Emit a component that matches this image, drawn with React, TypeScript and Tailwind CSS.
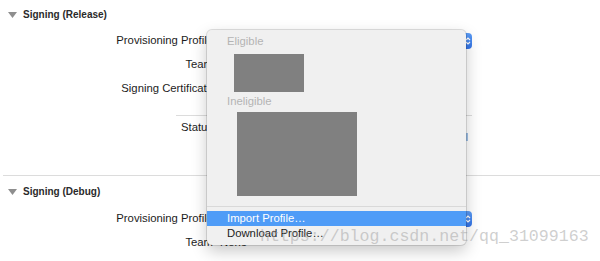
import React from "react";

const Tri = () => (
  <svg width="9" height="6" viewBox="0 0 9 6" className="shrink-0">
    <path d="M0 0 H9 L4.5 6 Z" fill="#8e8e8e" />
  </svg>
);

const Chev = () => (
  <svg width="6" height="10" viewBox="0 0 6 10">
    <path d="M1 4 L3 2 L5 4 M1 6 L3 8 L5 6" stroke="white" strokeWidth="1.2" fill="none" />
  </svg>
);

const Row = ({ label, children, className = "" }: { label: string; children?: React.ReactNode; className?: string }) => (
  <div className={`flex items-center h-[16px] ${className}`}>
    <div className="w-[213px] text-right text-[11.3px] text-[#1c1c1c] leading-none">{label}</div>
    <div className="ml-[7px] flex items-center h-full">{children}</div>
  </div>
);

const Popup = () => (
  <div className="w-[252px] h-[16px] rounded-[4px] bg-gradient-to-b from-[#5b9cf6] to-[#3272e6] flex items-center justify-end pr-[1px]">
    <Chev />
  </div>
);

export default function App() {
  return (
    <div
      className="relative w-[600px] h-[261px] overflow-hidden bg-white"
      style={{ fontFamily: '"Liberation Sans", Arial, sans-serif' }}
    >
      {/* Background form */}
      <div className="pt-[8px]">
        <div className="flex items-center h-[14px] pl-[8px] gap-[6px]">
          <Tri />
          <span className="text-[10px] font-bold text-[#2a2a2a] leading-none">Signing (Release)</span>
        </div>
        <Row label="Provisioning Profile" className="mt-[11px]">
          <Popup />
        </Row>
        <Row label="Team" className="mt-[8px]" />
        <Row label="Signing Certificate" className="mt-[8px]" />
        <div className="mt-[18px] ml-[176px] w-[296px] h-px bg-[#dcdcdc]" />
        <Row label="Status" className="mt-[4px]">
          <div className="w-[246px]" />
          <div className="w-[2px] h-[8px] mt-[18px] bg-[#9fc0e6]" />
        </Row>
        <div className="mt-[39px] ml-[3px] h-px bg-[#dcdcdc]" />
        <div className="flex items-center h-[14px] pl-[8px] gap-[6px] mt-[9px]">
          <Tri />
          <span className="text-[10px] font-bold text-[#2a2a2a] leading-none">Signing (Debug)</span>
        </div>
        <Row label="Provisioning Profile" className="mt-[12px]">
          <Popup />
        </Row>
        <Row label="Team" className="mt-[8px]">
          <span className="text-[11.3px] text-[#1c1c1c] leading-none">None</span>
        </Row>
      </div>

      {/* Popup menu */}
      <div className="absolute left-[207px] top-[30px] w-[259px] h-[215px] rounded-[5px] bg-[#f0f0f0] shadow-[0_0_0_1px_rgba(0,0,0,0.12),0_6px_16px_rgba(0,0,0,0.22)] pt-[5px] flex flex-col">
        <div className="h-[14px] pl-[20px] flex items-center text-[11.3px] text-[#b4b4b4] leading-none">Eligible</div>
        <div className="mt-[5px] ml-[27px] w-[70px] h-[38px] bg-[#808080]" />
        <div className="mt-[3px] h-[14px] pl-[20px] flex items-center text-[11.3px] text-[#b4b4b4] leading-none">Ineligible</div>
        <div className="mt-[3px] ml-[30px] w-[120px] h-[84px] bg-[#808080]" />
        <div className="mt-[10px] h-px bg-[#d9d9d9]" />
        <div className="mt-[4px] h-[15px] pl-[20px] flex items-center bg-[#4f9cf7] text-white text-[11.3px] leading-none">Import Profile…</div>
        <div className="h-[15px] pl-[20px] flex items-center text-[#1c1c1c] text-[11.3px] leading-none">Download Profile…</div>
      </div>

      {/* Watermark */}
      <div
        className="absolute left-[260px] top-[229px] text-[16.6px] leading-none text-[rgba(160,160,160,0.5)] whitespace-nowrap pointer-events-none"
        style={{ fontFamily: '"Liberation Mono", "Courier New", monospace' }}
      >
        https://blog.csdn.net/qq_31099163
      </div>
    </div>
  );
}
